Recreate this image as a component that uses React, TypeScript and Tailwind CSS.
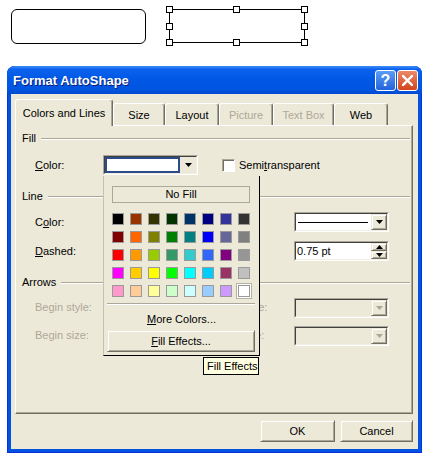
import React from "react";

const swatchRows = [
  ["#000000", "#993300", "#333300", "#003300", "#003366", "#000080", "#333399", "#333333"],
  ["#800000", "#FF6600", "#808000", "#008000", "#008080", "#0000FF", "#666699", "#808080"],
  ["#FF0000", "#FF9900", "#99CC00", "#339966", "#33CCCC", "#3366FF", "#800080", "#969696"],
  ["#FF00FF", "#FFCC00", "#FFFF00", "#00FF00", "#00FFFF", "#00CCFF", "#993366", "#C0C0C0"],
  ["#FF99CC", "#FFCC99", "#FFFF99", "#CCFFCC", "#CCFFFF", "#99CCFF", "#CC99FF", "#FFFFFF"],
];

const tabs = [
  { label: "Size", w: "w-[52px]", disabled: false },
  { label: "Layout", w: "w-[54px]", disabled: false },
  { label: "Picture", w: "w-[54px]", disabled: true },
  { label: "Text Box", w: "w-[61px]", disabled: true },
  { label: "Web", w: "w-[54px]", disabled: false },
];

const DownArrow = ({ color = "#000" }: { color?: string }) => (
  <svg width="7" height="4" viewBox="0 0 7 4">
    <path d="M0 0H7L3.5 4Z" fill={color} />
  </svg>
);

const UpArrow = () => (
  <svg width="7" height="4" viewBox="0 0 7 4">
    <path d="M0 4H7L3.5 0Z" fill="#000" />
  </svg>
);

const raised =
  "border border-t-[#ECE9D8] border-l-[#ECE9D8] border-r-[#716F64] border-b-[#716F64] bg-[#ECE9D8] shadow-[inset_1px_1px_0_#fff,inset_-1px_-1px_0_#ACA899]";

const DropButton = ({ disabled = false }: { disabled?: boolean }) => (
  <div className={`flex h-full w-[16px] items-center justify-center ${raised}`}>
    <DownArrow color={disabled ? "#ACA899" : "#000"} />
  </div>
);

type SunkenProps = { children: React.ReactNode; disabled?: boolean };
const Sunken = ({ children, disabled = false }: SunkenProps) => (
  <div className="flex h-[20px] w-[95px] border border-t-[#ACA899] border-l-[#ACA899] border-r-white border-b-white">
    <div
      className={`flex flex-1 border border-t-[#404040] border-l-[#404040] border-r-[#F1EFE2] border-b-[#F1EFE2] ${
        disabled ? "bg-[#ECE9D8]" : "bg-white"
      }`}
    >
      {children}
    </div>
  </div>
);

const Handle = ({ className }: { className: string }) => (
  <div className={`absolute h-[7px] w-[7px] border border-black bg-white ${className}`} />
);

const GroupHeader = ({ label, className = "" }: { label: string; className?: string }) => (
  <div className={`flex h-[13px] items-center pl-[6px] pr-[2px] ${className}`}>
    <span>{label}</span>
    <div className="ml-[5px] h-[2px] flex-1 border-t border-t-[#ACA899] border-b border-b-white" />
  </div>
);

export default function App() {
  return (
    <div className="h-[457px] w-[431px] overflow-hidden bg-white font-['Liberation_Sans',Arial,sans-serif] text-[11px] leading-[13px] text-black">
      {/* shapes on the page */}
      <div className="flex pl-[11px] pt-[9px]">
        <div className="h-[35px] w-[135px] rounded-[6px] border border-black" />
        <div className="relative ml-[23px] h-[34px] w-[136px] border border-black">
          <Handle className="-left-[4px] -top-[4px]" />
          <Handle className="left-[63px] -top-[4px]" />
          <Handle className="-right-[4px] -top-[4px]" />
          <Handle className="-left-[4px] top-[13px]" />
          <Handle className="-right-[4px] top-[13px]" />
          <Handle className="-left-[4px] -bottom-[4px]" />
          <Handle className="left-[63px] -bottom-[4px]" />
          <Handle className="-right-[4px] -bottom-[4px]" />
        </div>
      </div>

      {/* dialog */}
      <div className="ml-[7px] mt-[22px] flex h-[387px] w-[415px] flex-col rounded-t-[8px] bg-[#0053E1] shadow-[inset_0_0_0_1px_#0831D9]">
        <div className="flex h-[28px] items-center rounded-t-[8px] bg-[linear-gradient(to_bottom,#3E8EF7_0%,#0A62EC_12%,#0058E6_45%,#0055E0_85%,#0049CF_100%)] pl-[6px] pr-[4px] pt-[1px]">
          <span className="flex-1 text-[13px] font-bold leading-[15px] text-white [text-shadow:1px_1px_0_#0A1E7A]">
            Format AutoShape
          </span>
          <div className="flex h-[21px] w-[21px] items-center justify-center rounded-[3px] border border-white bg-[linear-gradient(to_bottom,#5A9CF8,#2363DB)] text-[16px] font-bold leading-none text-white">
            ?
          </div>
          <div className="ml-[1px] flex h-[21px] w-[21px] items-center justify-center rounded-[3px] border border-white bg-[linear-gradient(to_bottom,#EB8A6A,#D2461C)]">
            <svg width="11" height="11" viewBox="0 0 11 11">
              <path d="M1 1L10 10M10 1L1 10" stroke="#fff" strokeWidth="2.4" strokeLinecap="square" />
            </svg>
          </div>
        </div>

        <div className="mx-[4px] mb-[4px] flex-1 bg-[#ECE9D8] pl-[4px] pr-[5px] pt-[5px]">
          {/* tabs */}
          <div className="flex h-[26px] items-end">
            <div className="relative z-10 -mb-[1px] flex h-[27px] w-[98px] items-start justify-center rounded-t-[3px] border-l border-t border-r border-l-white border-t-white border-r-[#716F64] bg-[#ECE9D8] pt-[7px] shadow-[inset_-1px_0_0_#ACA899]">
              Colors and Lines
            </div>
            {tabs.map((t) => (
              <div
                key={t.label}
                className={`flex h-[22px] items-center justify-center rounded-t-[3px] border-l border-t border-r border-l-white border-t-white border-r-[#716F64] pt-[2px] shadow-[inset_-1px_0_0_#ACA899] ${t.w} ${
                  t.disabled ? "text-[#ACA899]" : "text-black"
                }`}
              >
                {t.label}
              </div>
            ))}
          </div>

          {/* panel */}
          <div className="relative h-[289px] border border-t-white border-l-white border-r-[#716F64] border-b-[#716F64] shadow-[inset_-1px_-1px_0_#ACA899]">
            <GroupHeader label="Fill" className="mt-[6px]" />
            <div className="mt-[10px] flex h-[20px] items-center pl-[19px]">
              <span className="w-[68px]">
                <span className="underline">C</span>olor:
              </span>
              <div className="flex h-[20px] w-[95px] border border-t-[#ACA899] border-l-[#ACA899] border-r-white border-b-white">
                <div className="flex flex-1 border border-t-[#404040] border-l-[#404040] border-r-[#F1EFE2] border-b-[#F1EFE2] bg-[#ECE9D8]">
                  <div className="flex-1 border-2 border-[#2B4C88] bg-white" />
                  <div className="flex w-[16px] items-center justify-center">
                    <DownArrow />
                  </div>
                </div>
              </div>
              <div className="ml-[24px] h-[13px] w-[13px] border border-t-[#ACA899] border-l-[#ACA899] border-r-white border-b-white bg-white shadow-[inset_1px_1px_0_#716F64]" />
              <span className="ml-[4px]">
                Semi<span className="underline">t</span>ransparent
              </span>
            </div>

            <GroupHeader label="Line" className="mt-[15px]" />
            <div className="mt-[9px] flex h-[20px] items-center pl-[19px]">
              <span className="w-[68px]">
                C<span className="underline">o</span>lor:
              </span>
              <Sunken>
                <div className="flex-1" />
                <DropButton />
              </Sunken>
              <span className="ml-[24px] w-[72px]">Style:</span>
              <Sunken>
                <div className="flex flex-1 items-center pl-[2px] pr-[3px]">
                  <div className="h-px flex-1 bg-black" />
                </div>
                <DropButton />
              </Sunken>
            </div>
            <div className="mt-[9px] flex h-[20px] items-center pl-[19px]">
              <span className="w-[68px]">
                <span className="underline">D</span>ashed:
              </span>
              <Sunken>
                <div className="flex-1" />
                <DropButton />
              </Sunken>
              <span className="ml-[24px] w-[72px]">Weight:</span>
              <Sunken>
                <div className="flex flex-1 items-center pl-[1px]">0.75 pt</div>
                <div className="flex w-[16px] flex-col">
                  <div className={`flex flex-1 items-center justify-center ${raised}`}>
                    <UpArrow />
                  </div>
                  <div className={`flex flex-1 items-center justify-center ${raised}`}>
                    <DownArrow />
                  </div>
                </div>
              </Sunken>
            </div>

            <GroupHeader label="Arrows" className="mt-[15px]" />
            <div className="mt-[9px] flex h-[19px] items-center pl-[19px] text-[#ACA899]">
              <span className="w-[68px]">Begin style:</span>
              <Sunken disabled>
                <div className="flex-1" />
                <DropButton disabled />
              </Sunken>
              <span className="ml-[21px] w-[75px]">End style:</span>
              <Sunken disabled>
                <div className="flex-1" />
                <DropButton disabled />
              </Sunken>
            </div>
            <div className="mt-[9px] flex h-[19px] items-center pl-[19px] text-[#ACA899]">
              <span className="w-[68px]">Begin size:</span>
              <Sunken disabled>
                <div className="flex-1" />
                <DropButton disabled />
              </Sunken>
              <span className="ml-[21px] w-[75px]">End size:</span>
              <Sunken disabled>
                <div className="flex-1" />
                <DropButton disabled />
              </Sunken>
            </div>

            {/* colour drop-down */}
            <div className="absolute left-[87px] top-[50px] z-20 flex h-[180px] w-[157px] flex-col border-l border-r border-b border-l-[#C5C2B2] border-r-black border-b-black bg-[#ECE9D8]">
              <div className="ml-[8px] mt-[10px] flex h-[17px] w-[138px] items-center justify-center border border-[#ACA899]">
                No Fill
              </div>
              <div className="ml-[8px] mt-[10px] grid w-[138px] grid-cols-8 gap-[6px]">
                {swatchRows.flat().map((c, i) => (
                  <div
                    key={i}
                    className={`h-[12px] w-[12px] border border-[#9A9A9A] ${
                      i === 39 ? "shadow-[0_0_0_1px_#fff,0_0_0_2px_#B5B2A2]" : ""
                    }`}
                    style={{ backgroundColor: c }}
                  />
                ))}
              </div>
              <div className="ml-[3px] mt-[6px] h-[2px] w-[148px] border-t border-t-[#ACA899] border-b border-b-white" />
              <div className="mt-[7px] flex h-[14px] items-center justify-center">
                <span>
                  <span className="underline">M</span>ore Colors...
                </span>
              </div>
              <div className={`ml-[3px] mt-[4px] flex h-[22px] w-[148px] items-center justify-center ${raised}`}>
                <span>
                  <span className="underline">F</span>ill Effects...
                </span>
              </div>
            </div>

            {/* tooltip */}
            <div className="absolute left-[187px] top-[231px] z-30 flex h-[18px] w-[56px] items-center border border-black bg-[#FFFFE1] pl-[3px]">
              Fill Effects
            </div>
          </div>

          {/* buttons */}
          <div className="mt-[6px] flex justify-end gap-[5px]">
            <div className={`flex h-[22px] w-[75px] items-center justify-center ${raised}`}>OK</div>
            <div className={`flex h-[22px] w-[73px] items-center justify-center ${raised}`}>Cancel</div>
          </div>
        </div>
      </div>
    </div>
  );
}
